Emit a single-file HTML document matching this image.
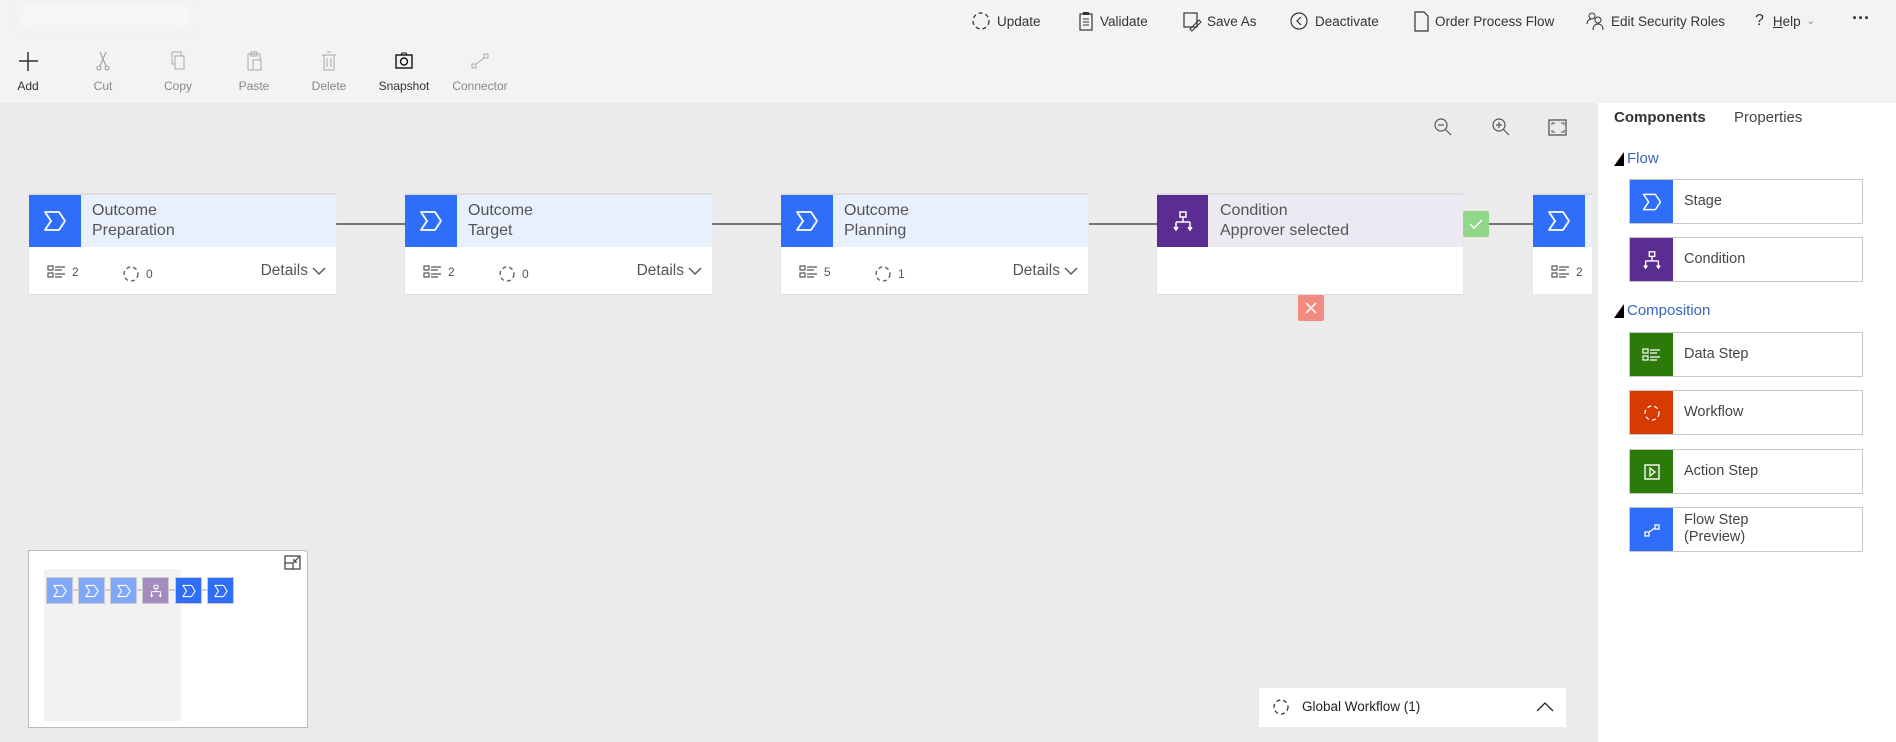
<!DOCTYPE html>
<html><head><meta charset="utf-8"><style>
*{margin:0;padding:0;box-sizing:border-box}
body{width:1896px;height:742px;overflow:hidden;background:#ebebeb;font-family:"Segoe UI","Liberation Sans",sans-serif;color:#333;position:relative}
.abs{position:absolute}
.top{left:0;top:0;width:1896px;height:103px;background:#f3f3f3}
.cmd{position:absolute;top:10px;height:22px;font-size:13.5px;color:#333;display:flex;align-items:center;gap:5px;white-space:nowrap}
.tb{position:absolute;top:50px;width:70px;text-align:center;font-size:12px;color:#888}
.tb svg{display:block;margin:0 auto 7px}
.panel{left:1598px;top:103px;width:298px;height:639px;background:#fff}
.card{position:absolute;top:193px;width:307px;height:101px;background:#fff;border-top:2px solid #ddd;box-shadow:0 1px 1px rgba(0,0,0,.08)}
.hd{position:absolute;left:0;top:0;right:0;height:52px;background:#e8f0fd}
.ic{position:absolute;left:0;top:0;width:52px;height:52px;background:#2f6dfb;display:flex;align-items:center;justify-content:center}
.tt{position:absolute;left:63px;top:6px;font-size:16px;line-height:20px;color:#555}
.ft{position:absolute;top:69px;font-size:12px;color:#444;display:flex;align-items:center;gap:5px}
.det{position:absolute;right:10px;top:67px;font-size:15.5px;color:#555;display:flex;align-items:center;gap:4px}
.line{position:absolute;height:2px;background:#777;top:223px}
.item{position:absolute;left:1629px;width:234px;height:45px;border:1px solid #c8c8c8;background:#fff}
.item .b{position:absolute;left:0;top:0;width:43px;height:43px;display:flex;align-items:center;justify-content:center}
.item .l{position:absolute;left:54px;top:11px;font-size:14.5px;color:#444;line-height:17px}
.sec{position:absolute;left:1614px;font-size:15px;color:#3a64b8;display:flex;align-items:center;gap:3px}
.mini{position:absolute;top:577px;width:27px;height:27px;display:flex;align-items:center;justify-content:center;border:1px solid #ccc}
</style></head><body>
<div class="abs top"></div>
<div class="abs" style="left:20px;top:6px;width:170px;height:22px;background:#f7f7f7;filter:blur(4px)"></div>

<div class="cmd" style="left:970px"><svg width="22" height="22" viewBox="0 0 22 22"><circle cx="11" cy="11" r="8" fill="none" stroke="#333" stroke-width="1.3" stroke-dasharray="4 3"/></svg>Update</div>
<div class="cmd" style="left:1077px"><svg width="18" height="22" viewBox="0 0 18 22"><rect x="3" y="4" width="12" height="16" fill="none" stroke="#333" stroke-width="1.2"/><rect x="6" y="2" width="6" height="3" fill="#333"/><path d="M6 9h6M6 12h6M6 15h6" stroke="#333"/></svg>Validate</div>
<div class="cmd" style="left:1182px"><svg width="20" height="22" viewBox="0 0 20 22"><rect x="2" y="3" width="13" height="14" fill="none" stroke="#333" stroke-width="1.2"/><path d="M8 19l9-9 2 2-9 9z" fill="none" stroke="#333"/></svg>Save As</div>
<div class="cmd" style="left:1288px"><svg width="22" height="22" viewBox="0 0 22 22"><circle cx="11" cy="11" r="8" fill="none" stroke="#333" stroke-width="1.2"/><path d="M13 7l-4 4 4 4" fill="none" stroke="#333" stroke-width="1.2"/></svg>Deactivate</div>
<div class="cmd" style="left:1412px"><svg width="18" height="24" viewBox="0 0 18 24"><path d="M3 3h9l4 4v15H3z" fill="none" stroke="#333" stroke-width="1.2"/></svg>Order Process Flow</div>
<div class="cmd" style="left:1586px"><svg width="20" height="22" viewBox="0 0 20 22"><circle cx="6" cy="6" r="3" fill="none" stroke="#333"/><circle cx="12" cy="10" r="3" fill="none" stroke="#333"/><path d="M7 20c0-4 2-6 5-6s5 2 5 6M1 14c0-3 2-5 5-5" fill="none" stroke="#333"/></svg>Edit Security Roles</div>
<div class="cmd" style="left:1755px;gap:0"><span style="font-size:16px;margin-right:9px">?</span><span><u>H</u>elp</span><span style="color:#888;font-size:10px;margin-left:6px">&#8964;</span></div>
<div class="cmd" style="left:1852px;font-size:18px;font-weight:bold;top:7px">···</div>

<div class="tb" style="left:-7px;color:#333"><svg width="22" height="22"><path d="M11 2v19M2 11h19" stroke="#333" stroke-width="1.5"/></svg>Add</div>
<div class="tb" style="left:68px"><svg width="22" height="22"><path d="M8 2l6 14M14 2L8 16" stroke="#999"/><circle cx="7" cy="18" r="2" fill="none" stroke="#999"/><circle cx="15" cy="18" r="2" fill="none" stroke="#999"/></svg>Cut</div>
<div class="tb" style="left:143px"><svg width="22" height="22"><rect x="5" y="2" width="9" height="12" fill="none" stroke="#aaa"/><rect x="8" y="6" width="9" height="13" fill="#f3f3f3" stroke="#aaa"/></svg>Copy</div>
<div class="tb" style="left:219px"><svg width="22" height="22"><rect x="5" y="4" width="12" height="16" fill="none" stroke="#aaa"/><rect x="8" y="2" width="6" height="4" fill="none" stroke="#aaa"/><rect x="10" y="10" width="8" height="10" fill="#f3f3f3" stroke="#aaa"/></svg>Paste</div>
<div class="tb" style="left:294px"><svg width="22" height="22"><rect x="6" y="5" width="10" height="15" fill="none" stroke="#aaa"/><path d="M4 5h14M9 2h4M9 8v9M13 8v9" stroke="#aaa"/></svg>Delete</div>
<div class="tb" style="left:369px;color:#333"><svg width="22" height="22"><rect x="3" y="5" width="16" height="13" fill="none" stroke="#111" stroke-width="1.4"/><circle cx="11" cy="11.5" r="3.5" fill="none" stroke="#111" stroke-width="1.4"/><path d="M8 5l1-2h4l1 2" fill="none" stroke="#111"/></svg>Snapshot</div>
<div class="tb" style="left:445px"><svg width="22" height="22"><rect x="3" y="14" width="4" height="4" fill="none" stroke="#aaa"/><rect x="15" y="4" width="4" height="4" fill="none" stroke="#aaa"/><path d="M7 14l8-6" stroke="#aaa"/></svg>Connector</div>

<svg class="abs" style="left:1432px;top:116px" width="24" height="24"><circle cx="9" cy="9" r="6" fill="none" stroke="#555" stroke-width="1.2"/><path d="M6 9h6M13 13l6 6" stroke="#555" stroke-width="1.2"/></svg>
<svg class="abs" style="left:1490px;top:116px" width="24" height="24"><circle cx="9" cy="9" r="6" fill="none" stroke="#555" stroke-width="1.2"/><path d="M6 9h6M9 6v6M13 13l6 6" stroke="#555" stroke-width="1.2"/></svg>
<svg class="abs" style="left:1547px;top:117px" width="22" height="22"><rect x="2" y="3" width="17" height="15" fill="none" stroke="#555" stroke-width="1.3"/><path d="M5 8V6h3M14 6h3v2M17 13v2h-3M8 15H5v-2" fill="none" stroke="#555"/></svg>

<div class="line" style="left:336px;width:69px"></div>
<div class="line" style="left:712px;width:69px"></div>
<div class="line" style="left:1089px;width:68px"></div>
<div class="line" style="left:1489px;width:44px"></div>

<svg width="0" height="0" style="position:absolute"><defs><symbol id="chev" viewBox="0 0 26 22"><path d="M3 2h14l6 9-6 9H3l6-9z" fill="none" stroke="#fff" stroke-width="1.8" stroke-linejoin="round"/></symbol>
<symbol id="ds" viewBox="0 0 20 16"><rect x="1" y="2" width="5" height="4" fill="none" stroke="currentColor" stroke-width="1.2"/><rect x="1" y="9" width="5" height="4" fill="none" stroke="currentColor" stroke-width="1.2"/><path d="M8 3h10M8 6h7M8 10h10M8 13h7" stroke="currentColor" stroke-width="1.3"/></symbol>
<symbol id="wf" viewBox="0 0 20 20"><circle cx="10" cy="10" r="7" fill="none" stroke="currentColor" stroke-width="1.3" stroke-dasharray="4 3"/></symbol>
<symbol id="cond" viewBox="0 0 22 22"><rect x="8" y="2" width="6" height="5" fill="none" stroke="#fff" stroke-width="1.5"/><path d="M11 7v5M4 12h14M4 12v7M18 12v7M2 17l2 3 2-3M16 17l2 3 2-3" fill="none" stroke="#fff" stroke-width="1.5"/></symbol>
<symbol id="dn" viewBox="0 0 14 10"><path d="M1 2l6 6 6-6" fill="none" stroke="#555" stroke-width="1.4"/></symbol></defs></svg>

<div class="card" style="left:29px"><div class="hd"></div><div class="ic"><svg width="26" height="22"><use href="#chev"/></svg></div><div class="tt">Outcome<br>Preparation</div>
<div class="ft" style="left:18px;color:#555"><svg width="20" height="16"><use href="#ds"/></svg>2</div><div class="ft" style="left:92px;color:#555"><svg width="20" height="20"><use href="#wf"/></svg>0</div><div class="det">Details <svg width="14" height="10"><use href="#dn"/></svg></div></div>
<div class="card" style="left:405px"><div class="hd"></div><div class="ic"><svg width="26" height="22"><use href="#chev"/></svg></div><div class="tt">Outcome<br>Target</div>
<div class="ft" style="left:18px;color:#555"><svg width="20" height="16"><use href="#ds"/></svg>2</div><div class="ft" style="left:92px;color:#555"><svg width="20" height="20"><use href="#wf"/></svg>0</div><div class="det">Details <svg width="14" height="10"><use href="#dn"/></svg></div></div>
<div class="card" style="left:781px"><div class="hd"></div><div class="ic"><svg width="26" height="22"><use href="#chev"/></svg></div><div class="tt">Outcome<br>Planning</div>
<div class="ft" style="left:18px;color:#555"><svg width="20" height="16"><use href="#ds"/></svg>5</div><div class="ft" style="left:92px;color:#555"><svg width="20" height="20"><use href="#wf"/></svg>1</div><div class="det">Details <svg width="14" height="10"><use href="#dn"/></svg></div></div>
<div class="card" style="left:1157px;width:306px"><div class="hd" style="background:#ece9f3"></div><div class="ic" style="background:#5b2d91;width:51px"><svg width="22" height="22"><use href="#cond"/></svg></div><div class="tt" style="left:63px">Condition<br>Approver selected</div></div>
<div class="card" style="left:1533px;width:59px;box-shadow:none"><div class="hd"></div><div class="ic"><svg width="26" height="22"><use href="#chev"/></svg></div><div class="ft" style="left:18px;color:#555"><svg width="20" height="16"><use href="#ds"/></svg>2</div></div>

<div class="abs" style="left:1463px;top:211px;width:26px;height:26px;background:#92d88a;border-radius:2px"><svg width="26" height="26"><path d="M7 13l4 4 8-8" fill="none" stroke="#fff" stroke-width="1.5"/></svg></div>
<div class="abs" style="left:1298px;top:295px;width:26px;height:26px;background:#f28b82;border-radius:2px"><svg width="26" height="26"><path d="M8 8l10 10M18 8L8 18" stroke="#fff" stroke-width="1.5"/></svg></div>

<div class="abs" style="left:28px;top:550px;width:280px;height:178px;background:#fff;border:1px solid #bbb;border-radius:0 4px 0 0"></div>
<div class="abs" style="left:44px;top:569px;width:137px;height:152px;background:#f2f2f2"></div>
<svg class="abs" style="left:284px;top:555px" width="18" height="16"><rect x="1" y="1" width="15" height="13" fill="none" stroke="#444" stroke-width="1.3"/><path d="M1 8h8v6M15 2l-5 5M10 4v3h3" fill="none" stroke="#444" stroke-width="1.2"/></svg>
<div class="abs" style="left:60px;top:589px;width:160px;height:2px;background:#ccc"></div>
<div class="mini" style="left:46px;background:#7fa8f9"><svg width="16" height="14"><use href="#chev"/></svg></div>
<div class="mini" style="left:78px;background:#7fa8f9"><svg width="16" height="14"><use href="#chev"/></svg></div>
<div class="mini" style="left:110px;background:#7fa8f9"><svg width="16" height="14"><use href="#chev"/></svg></div>
<div class="mini" style="left:142px;background:#a38bc0"><svg width="14" height="14"><use href="#cond"/></svg></div>
<div class="mini" style="left:175px;background:#2f6dfb"><svg width="16" height="14"><use href="#chev"/></svg></div>
<div class="mini" style="left:207px;background:#2f6dfb"><svg width="16" height="14"><use href="#chev"/></svg></div>

<div class="abs" style="left:1259px;top:688px;width:307px;height:39px;background:#fff">
<svg class="abs" style="left:12px;top:9px;color:#333" width="20" height="20"><use href="#wf"/></svg>
<div class="abs" style="left:43px;top:11px;font-size:13.5px;color:#222">Global Workflow (1)</div>
<svg class="abs" style="left:276px;top:12px" width="20" height="14"><path d="M2 11l8-8 8 8" fill="none" stroke="#222" stroke-width="1.3"/></svg>
</div>

<div class="abs panel"></div>
<div class="abs" style="left:1614px;top:109px;font-size:15px;font-weight:bold;color:#333">Components</div>
<div class="abs" style="left:1734px;top:109px;font-size:15px;color:#444">Properties</div>
<div class="sec" style="top:150px"><svg width="10" height="14"><path d="M10 0v14H0z" fill="#000"/></svg>Flow</div>
<div class="item" style="top:179px"><div class="b" style="background:#2f6dfb"><svg width="22" height="20"><use href="#chev"/></svg></div><div class="l" style="top:13px">Stage</div></div>
<div class="item" style="top:237px"><div class="b" style="background:#5b2d91"><svg width="20" height="20"><use href="#cond"/></svg></div><div class="l" style="top:13px">Condition</div></div>
<div class="sec" style="top:302px"><svg width="10" height="14"><path d="M10 0v14H0z" fill="#000"/></svg>Composition</div>
<div class="item" style="top:332px"><div class="b" style="background:#2b7a0b;color:#fff"><svg width="20" height="16"><use href="#ds"/></svg></div><div class="l" style="top:13px">Data Step</div></div>
<div class="item" style="top:390px"><div class="b" style="background:#d83b01;color:#fff"><svg width="20" height="20"><use href="#wf"/></svg></div><div class="l" style="top:13px">Workflow</div></div>
<div class="item" style="top:449px"><div class="b" style="background:#2b7a0b"><svg width="18" height="18"><rect x="2" y="2" width="14" height="14" fill="none" stroke="#fff" stroke-width="1.4"/><path d="M7 5v8l5-4z" fill="none" stroke="#fff" stroke-width="1.3"/></svg></div><div class="l" style="top:13px">Action Step</div></div>
<div class="item" style="top:507px"><div class="b" style="background:#2f6dfb"><svg width="20" height="20"><rect x="3" y="12" width="4" height="4" fill="none" stroke="#fff" stroke-width="1.3"/><rect x="13" y="5" width="4" height="4" fill="none" stroke="#fff" stroke-width="1.3"/><path d="M7 12l6-4" stroke="#fff" stroke-width="1.3"/></svg></div><div class="l" style="top:4px">Flow Step<br>(Preview)</div></div>
</body></html>
